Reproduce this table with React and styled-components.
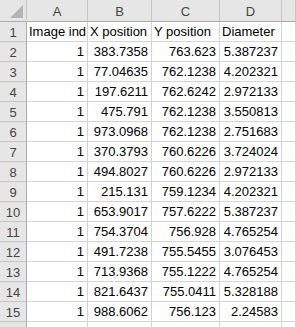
import React from 'react'
import styled, { createGlobalStyle } from 'styled-components'

const GlobalStyle = createGlobalStyle`
  body {
    margin: 0;
    background: #ffffff;
    font-family: "Liberation Sans", Arial, sans-serif;
  }
`

const rows = [
  ['Image ind', 'X position', 'Y position', 'Diameter'],
  [1, 383.7358, 763.623, 5.387237],
  [1, 77.04635, 762.1238, 4.202321],
  [1, 197.6211, 762.6242, 2.972133],
  [1, 475.791, 762.1238, 3.550813],
  [1, 973.0968, 762.1238, 2.751683],
  [1, 370.3793, 760.6226, 3.724024],
  [1, 494.8027, 760.6226, 2.972133],
  [1, 215.131, 759.1234, 4.202321],
  [1, 653.9017, 757.6222, 5.387237],
  [1, 754.3704, 756.928, 4.765254],
  [1, 491.7238, 755.5455, 3.076453],
  [1, 713.9368, 755.1222, 4.765254],
  [1, 821.6437, 755.0411, 5.328188],
  [1, 988.6062, 756.123, 2.24583],
]

export default function App() {
  return (
    <>
      <GlobalStyle />
      <Sheet>
        <Corner>
          <svg width="13" height="13" viewBox="0 0 13 13">
            <polygon points="13,0 13,13 0,13" fill="#b4b4b4" />
          </svg>
        </Corner>
        {['A', 'B', 'C', 'D', ''].map((c, i) => (
          <ColHead key={i}>{c}</ColHead>
        ))}
        {rows.map((r, ri) => (
          <React.Fragment key={ri}>
            <RowHead>{ri + 1}</RowHead>
            {r.map((v, ci) => (
              <Cell key={ci} $num={typeof v === 'number'}>
                {v}
              </Cell>
            ))}
            <Cell />
          </React.Fragment>
        ))}
        {/* row 16 is only a sliver at the bottom edge */}
        <RowHead />
        {[0, 1, 2, 3, 4].map((i) => (
          <Cell key={i} />
        ))}
      </Sheet>
    </>
  )
}

const Sheet = styled.div`
  display: grid;
  grid-template-columns: 27px 61px 64px 68px 62px 1fr;
  grid-template-rows: 22px;
  grid-auto-rows: 20px;
  width: 296px;
  height: 327px;
  overflow: hidden;
  font-size: 13px;
  color: #000;
`

const Corner = styled.div`
  background: #e6e6e6;
  border-right: 1px solid #c6c6c6;
  border-bottom: 1px solid #ababab;
  display: flex;
  align-items: flex-end;
  justify-content: flex-end;
  padding: 0 3px 3px 0;
`

const ColHead = styled.div`
  background: #e6e6e6;
  border-right: 1px solid #c6c6c6;
  border-bottom: 1px solid #ababab;
  color: #444;
  display: flex;
  align-items: center;
  justify-content: center;
  padding-top: 2px;
`

const RowHead = styled.div`
  background: #e6e6e6;
  border-right: 1px solid #ababab;
  border-bottom: 1px solid #c6c6c6;
  color: #444;
  display: flex;
  align-items: center;
  justify-content: center;
  padding-top: 2px;
`

const Cell = styled.div`
  border-right: 1px solid #d4d4d4;
  border-bottom: 1px solid #d4d4d4;
  white-space: nowrap;
  overflow: hidden;
  display: flex;
  align-items: flex-end;
  justify-content: ${(p) => (p.$num ? 'flex-end' : 'flex-start')};
  padding: 0 3px 2px 2px;
  line-height: 15px;
`
